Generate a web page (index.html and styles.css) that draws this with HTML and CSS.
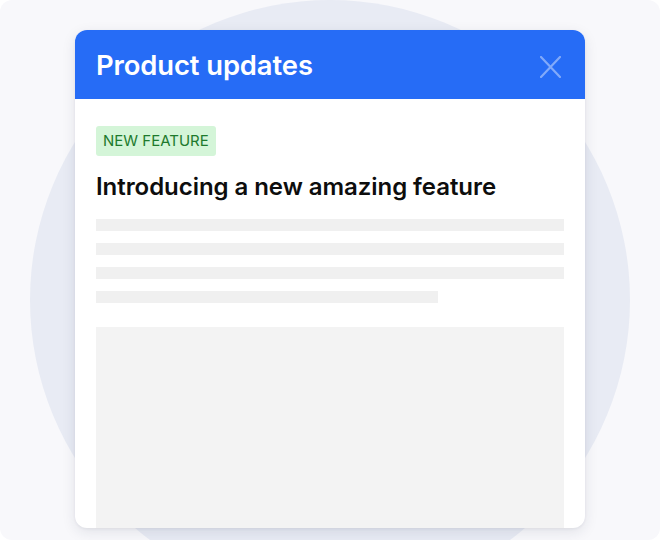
FILE: index.html
```html
<!DOCTYPE html>
<html>
<head>
<meta charset="utf-8">
<link rel="stylesheet" href="styles.css">
</head>
<body>
<div class="frame">
  <div class="blob"></div>
  <div class="card">
    <div class="card-header">
      <h1 class="title">Product updates</h1>
      <svg class="close" width="21" height="22" viewBox="0 0 21 22" aria-hidden="true">
        <path d="M1 1 L20 21 M20 1 L1 21" stroke="currentColor" stroke-width="2.2" stroke-linecap="square" fill="none"/>
      </svg>
    </div>
    <div class="card-body">
      <span class="badge">NEW FEATURE</span>
      <h2 class="headline">Introducing a new amazing feature</h2>
      <div class="lines">
        <div class="line"></div>
        <div class="line"></div>
        <div class="line"></div>
        <div class="line short"></div>
      </div>
      <div class="media"></div>
    </div>
  </div>
</div>
</body>
</html>
```
FILE: styles.css
```css
html, body {
  margin: 0;
  padding: 0;
  background: #ffffff;
}
body {
  font-family: Inter, "Noto Sans", sans-serif;
}
.frame {
  position: relative;
  width: 660px;
  height: 540px;
  border-radius: 12px;
  background: #f8f8fb;
  overflow: hidden;
  display: flex;
  flex-direction: column;
  align-items: flex-start;
  padding: 30px 0 0 75px;
  box-sizing: border-box;
}
.blob {
  position: absolute;
  left: 30px;
  top: 0;
  width: 600px;
  height: 600px;
  border-radius: 50%;
  background: #e8ebf4;
}
.card {
  position: relative;
  width: 510px;
  height: 498px;
  border-radius: 12px;
  background: #ffffff;
  overflow: hidden;
  box-shadow: 0 4px 14px rgba(30, 40, 70, 0.10), 0 1px 3px rgba(30, 40, 70, 0.06);
  display: flex;
  flex-direction: column;
}
.card-header {
  height: 69px;
  flex: none;
  background: #266cf6;
  display: flex;
  align-items: center;
  justify-content: space-between;
  padding: 0 24px 0 21px;
}
.title {
  margin: 0;
  color: #ffffff;
  font-size: 27.4px;
  font-weight: 600;
  letter-spacing: -0.1px;
}
.close {
  color: rgba(255, 255, 255, 0.42);
  display: block;
  margin-top: 5px;
}
.card-body {
  flex: 1;
  display: flex;
  flex-direction: column;
  align-items: flex-start;
  padding: 27px 21px 0;
}
.badge {
  display: inline-block;
  height: 30px;
  line-height: 30px;
  padding: 0 7px;
  border-radius: 3px;
  background: #d4f5d8;
  color: #1d7a2d;
  font-size: 15px;
  font-weight: 400;
}
.headline {
  margin: 16px 0 0;
  font-size: 24px;
  line-height: 30px;
  font-weight: 600;
  letter-spacing: -0.05px;
  color: #0d0d0d;
}
.lines {
  align-self: stretch;
  margin-top: 17px;
  display: flex;
  flex-direction: column;
  gap: 12px;
}
.line {
  height: 12px;
  background: #f0f0f0;
}
.line.short {
  width: 342px;
}
.media {
  align-self: stretch;
  flex: 1;
  margin-top: 24px;
  background: #f3f3f3;
}
```
